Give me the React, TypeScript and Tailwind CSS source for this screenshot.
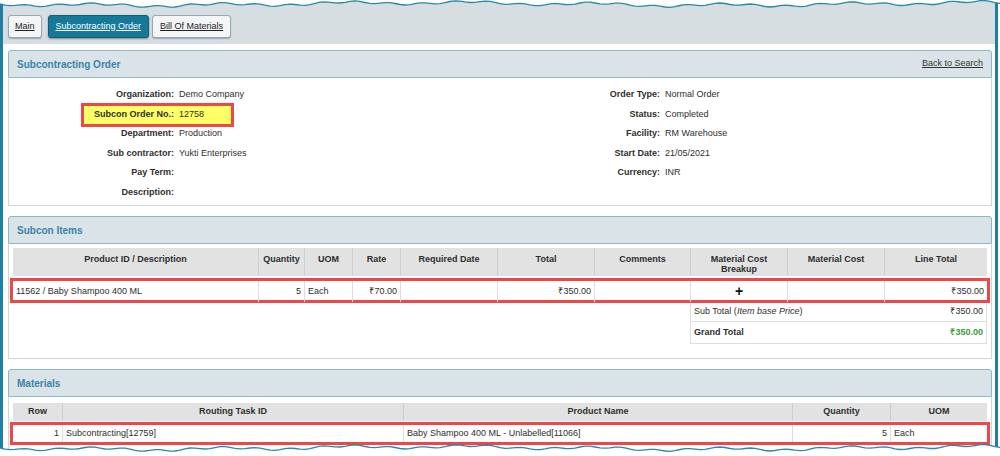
import React from 'react';

const itemCols = 'grid grid-cols-[245px_46px_48px_48px_97px_97px_96px_97px_97px_103px]';
const matCols = 'grid grid-cols-[49px_341px_389px_98px_97px]';

const TornEdge: React.FC<{ side: 'top' | 'bottom' }> = ({ side }) => {
  const pts: string[] = [];
  for (let x = 0; x <= 1000; x += 5) {
    const y = 4 + Math.sin(x * 0.05) * 1.3 + Math.sin(x * 0.19) * 1.0 + Math.sin(x * 0.011) * 1.3;
    pts.push(`${x},${y.toFixed(1)}`);
  }
  const line = pts.join(' ');
  const fill = side === 'top' ? `0,0 ${line} 1000,0` : `0,12 ${line} 1000,12`;
  return (
    <svg
      width="1000"
      height="12"
      viewBox="0 0 1000 12"
      className={`absolute left-0 ${side === 'top' ? 'top-0' : 'bottom-0'}`}
    >
      <polygon points={fill} fill="#ffffff" />
      <polyline points={line} fill="none" stroke="#2b88a8" strokeWidth="1.3" />
    </svg>
  );
};

const PanelHeader: React.FC<{ title: string; right?: React.ReactNode }> = ({ title, right }) => (
  <div className="h-[28px] flex items-center justify-between px-[8px] bg-[#dae3e8] border border-[#8db8cb] rounded-t-[3px]">
    <span className="font-bold text-[10px] text-[#3a84a8]">{title}</span>
    {right}
  </div>
);

const Field: React.FC<{ label: string; value?: string; w: number }> = ({ label, value, w }) => (
  <div className="flex h-[19.5px] items-center">
    <span className="font-bold text-right shrink-0" style={{ width: w }}>{label}</span>
    <span className="pl-[5px]">{value}</span>
  </div>
);

const itemHeads = ['Product ID / Description', 'Quantity', 'UOM', 'Rate', 'Required Date', 'Total', 'Comments', 'Material Cost Breakup', 'Material Cost', 'Line Total'];

export default function App() {
  return (
    <div
      className="relative w-[1000px] h-[456px] overflow-hidden bg-white text-[9px] text-[#2e2e2e]"
      style={{ fontFamily: '"Liberation Sans", Arial, sans-serif' }}
    >
      <div className="h-full border-l-[3px] border-r-[3px] border-[#1d7fa1] mr-[2px]">
        {/* tabs */}
        <div className="bg-[#d7dee2] pt-[15px] pb-[6px] px-[5px] flex">
          <span className="h-[23px] px-[6px] flex items-center rounded-[3px] border border-[#93a9b3] bg-[#f3f5f6] underline text-[#222] shadow-[0_1px_1px_rgba(0,0,0,0.25)]">Main</span>
          <span className="h-[23px] px-[7px] ml-[6px] flex items-center rounded-[3px] border border-[#145f78] bg-[#17799a] underline text-white shadow-[0_1px_2px_rgba(0,0,0,0.4)]">Subcontracting Order</span>
          <span className="h-[23px] px-[7px] ml-[3px] flex items-center rounded-[3px] border border-[#93a9b3] bg-[#f3f5f6] underline text-[#222] shadow-[0_1px_1px_rgba(0,0,0,0.25)]">Bill Of Materials</span>
        </div>

        <div className="pl-[5px] pr-[3px] pt-[6px]">
          {/* panel 1 */}
          <div>
            <PanelHeader
              title="Subcontracting Order"
              right={<span className="underline text-[#333] text-[9px]">Back to Search</span>}
            />
            <div className="border border-t-0 border-[#d4d4d4] pt-[7px] pb-[3px] grid grid-cols-[492px_1fr]">
              <div>
                <Field label="Organization:" value="Demo Company" w={165} />
                <div className="relative">
                  <span className="absolute left-[72px] top-[-2px] w-[153px] h-[24px] bg-[#ffff66] border-[3px] border-[#ef4747]" />
                  <div className="relative">
                    <Field label="Subcon Order No.:" value="12758" w={165} />
                  </div>
                </div>
                <Field label="Department:" value="Production" w={165} />
                <Field label="Sub contractor:" value="Yukti Enterprises" w={165} />
                <Field label="Pay Term:" w={165} />
                <Field label="Description:" w={165} />
              </div>
              <div>
                <Field label="Order Type:" value="Normal Order" w={159} />
                <Field label="Status:" value="Completed" w={159} />
                <Field label="Facility:" value="RM Warehouse" w={159} />
                <Field label="Start Date:" value="21/05/2021" w={159} />
                <Field label="Currency:" value="INR" w={159} />
              </div>
            </div>
          </div>

          {/* panel 2 */}
          <div className="mt-[10px]">
            <PanelHeader title="Subcon Items" />
            <div className="border border-t-0 border-[#d4d4d4] px-[4px] pt-[4px] pb-[14px]">
              <div className={`${itemCols} bg-[#e2e2e2] font-bold h-[28px] text-center`}>
                {itemHeads.map((h, i) => (
                  <div key={h} className={`px-[2px] pt-[6px] leading-[10px] ${i > 0 ? 'border-l border-[#cfcfcf]' : ''}`}>
                    {h === 'Material Cost Breakup' ? (<>Material Cost<br />Breakup</>) : h}
                  </div>
                ))}
              </div>
              <div className="-mx-[3px] mt-[2px] border-[3px] border-[#ef4747]">
                <div className={`${itemCols} h-[19px] items-stretch`}>
                  <div className="px-[3px] flex items-center">11562 / Baby Shampoo 400 ML</div>
                  <div className="px-[3px] flex items-center justify-end border-l border-[#ddd]">5</div>
                  <div className="px-[3px] flex items-center border-l border-[#ddd]">Each</div>
                  <div className="px-[3px] flex items-center justify-end border-l border-[#ddd]">₹70.00</div>
                  <div className="border-l border-[#ddd]" />
                  <div className="px-[3px] flex items-center justify-end border-l border-[#ddd]">₹350.00</div>
                  <div className="border-l border-[#ddd]" />
                  <div className="flex items-center justify-center border-l border-[#ddd] text-[14px] font-bold text-[#111]">+</div>
                  <div className="border-l border-[#ddd]" />
                  <div className="px-[3px] flex items-center justify-end border-l border-[#ddd]">₹350.00</div>
                </div>
              </div>
              <div className="ml-[677px] border-x border-b border-[#ddd]">
                <div className="flex justify-between items-center h-[19px] px-[3px] border-b border-[#ddd]">
                  <span>Sub Total (<i>Item base Price</i>)</span>
                  <span>₹350.00</span>
                </div>
                <div className="flex justify-between items-center h-[21px] px-[3px] font-bold">
                  <span>Grand Total</span>
                  <span className="text-[#3a9a3a]">₹350.00</span>
                </div>
              </div>
            </div>
          </div>

          {/* panel 3 */}
          <div className="mt-[10px]">
            <PanelHeader title="Materials" />
            <div className="border border-t-0 border-[#d4d4d4] px-[4px] pt-[6px] pb-[10px]">
              <div className={`${matCols} bg-[#e2e2e2] font-bold h-[18px] text-center`}>
                {['Row', 'Routing Task ID', 'Product Name', 'Quantity', 'UOM'].map((h, i) => (
                  <div key={h} className={`flex items-center justify-center ${i > 0 ? 'border-l border-[#cfcfcf]' : ''}`}>{h}</div>
                ))}
              </div>
              <div className="-mx-[3px] mt-[1px] border-[3px] border-[#ef4747]">
                <div className={`${matCols} h-[17px]`}>
                  <div className="px-[3px] flex items-center justify-end">1</div>
                  <div className="px-[3px] flex items-center border-l border-[#ddd]">Subcontracting[12759]</div>
                  <div className="px-[3px] flex items-center border-l border-[#ddd]">Baby Shampoo 400 ML - Unlabelled[11066]</div>
                  <div className="px-[3px] flex items-center justify-end border-l border-[#ddd]">5</div>
                  <div className="px-[3px] flex items-center border-l border-[#ddd]">Each</div>
                </div>
              </div>
            </div>
          </div>
        </div>
      </div>
      <TornEdge side="top" />
      <TornEdge side="bottom" />
    </div>
  );
}
